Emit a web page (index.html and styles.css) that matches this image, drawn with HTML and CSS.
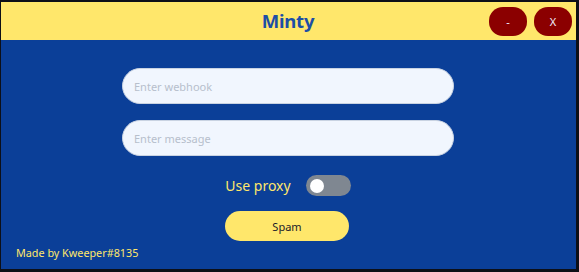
FILE: index.html
```html
<!DOCTYPE html>
<html>
<head>
<meta charset="utf-8">
<link rel="stylesheet" href="styles.css">
</head>
<body>
<div class="window">
  <header class="titlebar">
    <div class="title">Minty</div>
    <div class="controls">
      <button class="ctl">-</button>
      <button class="ctl">X</button>
    </div>
  </header>
  <main class="content">
    <input class="field" type="text" placeholder="Enter webhook">
    <input class="field field-second" type="text" placeholder="Enter message">
    <div class="proxy-row">
      <span class="proxy-label">Use proxy</span>
      <span class="toggle"><span class="knob"></span></span>
    </div>
    <button class="spam">Spam</button>
    <div class="footer">Made by Kweeper#8135</div>
  </main>
</div>
</body>
</html>
```

FILE: styles.css
```css
html, body {
  margin: 0;
  padding: 0;
  background: #0d0f17;
  width: 579px;
  height: 272px;
  overflow: hidden;
}
.window {
  margin: 2px 3px 0 1px;
  width: 575px;
  height: 267px;
  display: flex;
  flex-direction: column;
  font-family: "Noto Sans", "Open Sans", sans-serif;
}
.titlebar {
  height: 38px;
  background: #ffe76b;
  position: relative;
  display: flex;
  align-items: center;
  justify-content: center;
}
.title {
  font-size: 18.5px;
  font-weight: 700;
  color: #1c4ea6;
  letter-spacing: -0.2px;
  padding-bottom: 1px;
  padding-right: 1px;
}
.controls {
  position: absolute;
  right: 4px;
  top: 5px;
  display: flex;
  gap: 7px;
}
.ctl {
  width: 38px;
  height: 29px;
  border: none;
  border-radius: 14px;
  background: #8b0000;
  color: #f0f0ff;
  font-family: "Noto Sans", sans-serif;
  font-size: 11px;
  padding: 0;
}
.content {
  flex: 1;
  background: #0b3f98;
  display: flex;
  flex-direction: column;
  align-items: center;
  padding-top: 28px;
  padding-right: 1px;
  position: relative;
}
.field {
  box-sizing: border-box;
  width: 332px;
  height: 36px;
  border-radius: 18px;
  border: 1px solid #c9d3e2;
  background: #f1f6fe;
  padding: 0 11px;
  font-family: "Noto Sans", sans-serif;
  font-size: 11px;
  outline: none;
}
.field::placeholder {
  color: #b7bfcc;
}
.field-second {
  margin-top: 16px;
}
.proxy-row {
  margin-top: 19px;
  display: flex;
  align-items: center;
  gap: 15px;
  height: 21px;
}
.proxy-label {
  color: #ffe76b;
  font-size: 14px;
}
.toggle {
  width: 45px;
  height: 21px;
  border-radius: 11px;
  background: #7f8791;
  display: flex;
  align-items: center;
  padding-left: 4px;
  box-sizing: border-box;
}
.knob {
  width: 14px;
  height: 14px;
  border-radius: 50%;
  background: #ffffff;
}
.spam {
  margin-top: 15px;
  width: 124px;
  height: 30px;
  border: none;
  border-radius: 15px;
  background: #ffe76b;
  color: #1a1a2a;
  font-family: "Noto Sans", sans-serif;
  font-size: 11px;
  padding: 0;
  margin-right: 2px;
}
.footer {
  align-self: flex-start;
  margin-left: 15px;
  margin-top: 4px;
  color: #ffe76b;
  font-size: 10.8px;
}
```
